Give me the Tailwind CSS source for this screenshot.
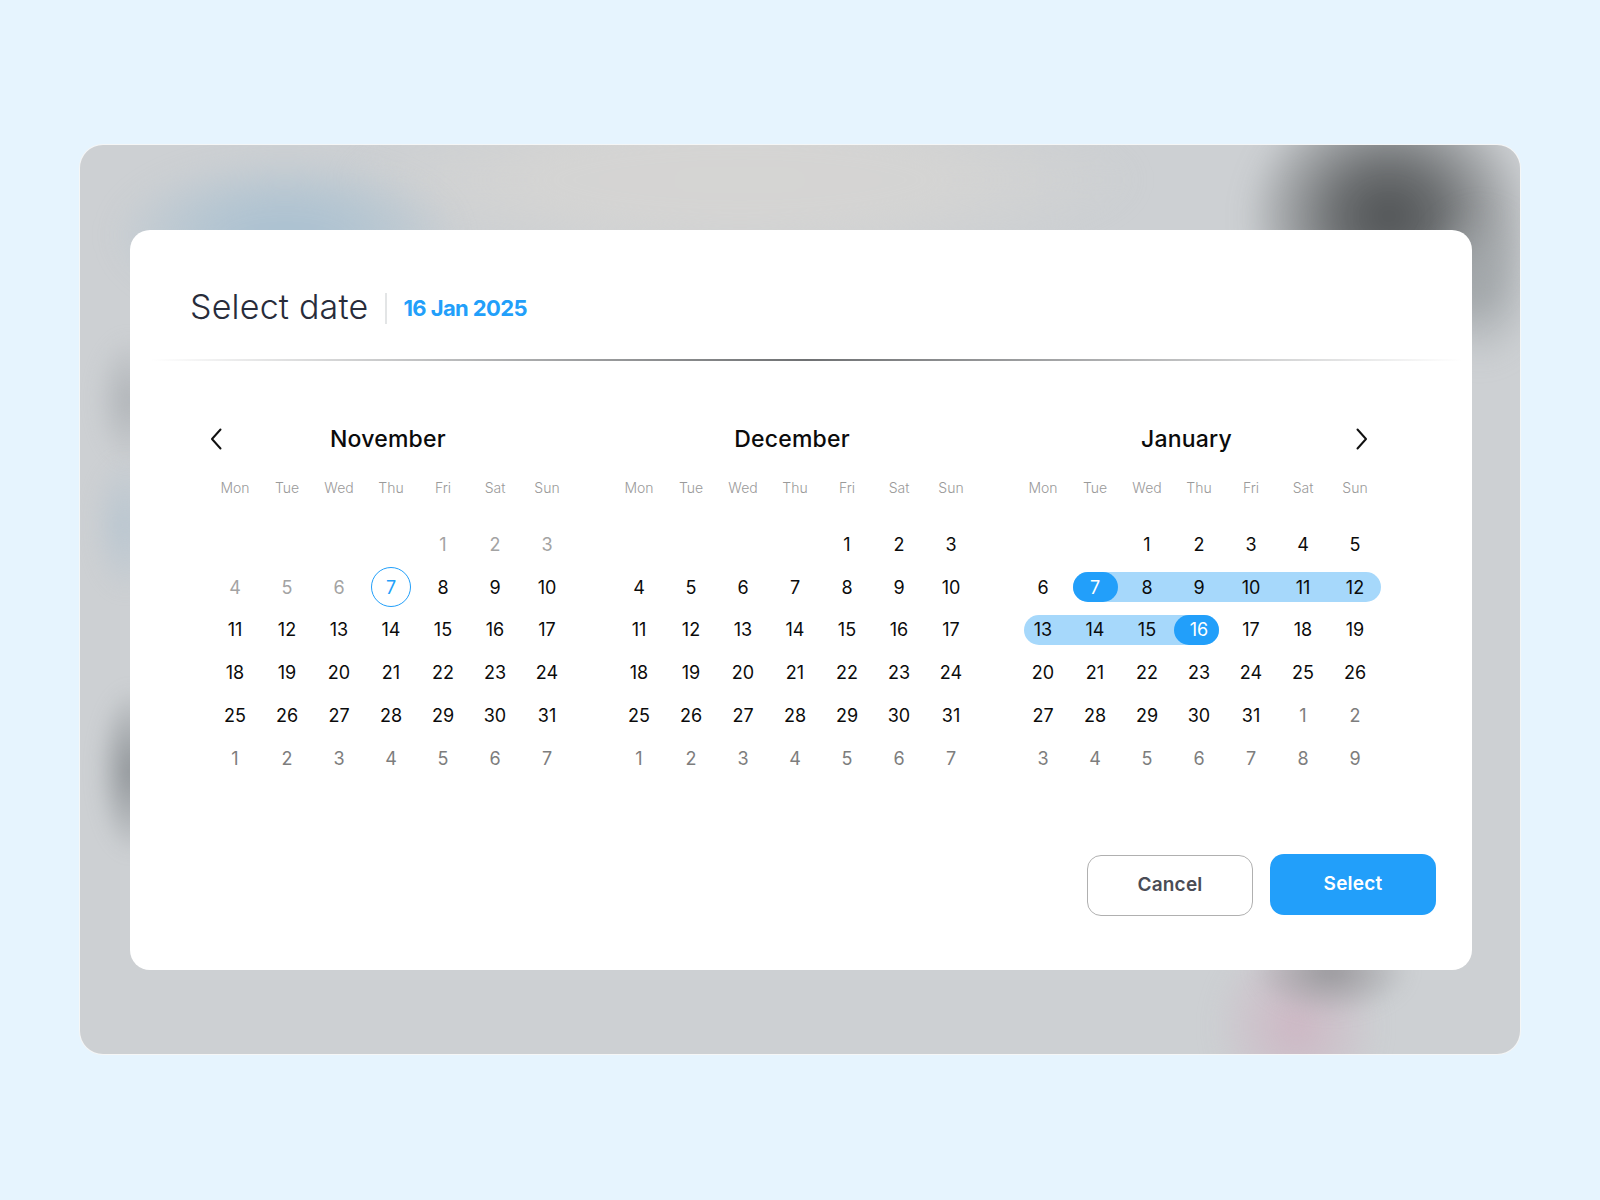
<!DOCTYPE html>
<html lang="en">
<head>
<meta charset="utf-8">
<title>Select date</title>
<script src="https://cdn.jsdelivr.net/npm/@tailwindcss/browser@4"></script>
</head>
<body class="bg-[#e6f4fe] font-['Inter',sans-serif]">
<div class="h-[1200px] pt-[144px] pl-[79px] overflow-hidden">
  <!-- blurred backdrop -->
  <div class="relative w-[1442px] h-[911px] pt-[85px] pl-[50px] rounded-[24px] overflow-hidden bg-[#cdd0d3] border border-white/80">
    <div class="absolute left-[260px] top-[-50px] w-[800px] h-[170px] blur-[12px] bg-[radial-gradient(ellipse_closest-side,#d6d5d3,#d4d4d3_50%,transparent)]"></div>
    <div class="absolute left-[30px] top-[10px] w-[350px] h-[160px] blur-[12px] bg-[radial-gradient(ellipse_closest-side,#a9c0d1,#b4c5d1_45%,transparent)]"></div>
    <div class="absolute left-[1164px] top-[-59px] w-[290px] h-[260px] blur-[12px] bg-[radial-gradient(ellipse_closest-side,#505355,#6a6d6f_35%,transparent)]"></div>
    <div class="absolute left-[1340px] top-[60px] w-[120px] h-[160px] blur-[12px] bg-[radial-gradient(ellipse_closest-side,#a0a5a8,transparent)]"></div>
    <div class="absolute left-[16px] top-[541px] w-[70px] h-[170px] blur-[8px] bg-[radial-gradient(ellipse_closest-side,#8e9397,transparent)]"></div>
    <div class="absolute left-[14px] top-[190px] w-[70px] h-[130px] blur-[8px] bg-[radial-gradient(ellipse_closest-side,#b0b4b8,transparent)]"></div>
    <div class="absolute left-[10px] top-[310px] w-[70px] h-[140px] blur-[8px] bg-[radial-gradient(ellipse_closest-side,#b9c6d0,transparent)]"></div>
    <div class="absolute left-[1131px] top-[786px] w-[170px] h-[190px] blur-[10px] bg-[radial-gradient(ellipse_closest-side,#cdb7c4,transparent)]"></div>
    <div class="absolute left-[1171px] top-[781px] w-[160px] h-[90px] blur-[8px] bg-[radial-gradient(ellipse_closest-side,#98979b,transparent)]"></div>

    <!-- dialog -->
    <div class="relative w-[1342px] h-[740px] rounded-[20px] bg-white">
      <div class="flex items-center h-[129px] pt-[27px] pl-[60px]">
        <h2 class="mb-[3px] text-[34px] font-light text-[#282c3a] tracking-[0.2px]">Select date</h2>
        <span class="w-[2px] h-[31px] bg-[#e3e5e6] ml-[17px]"></span>
        <span class="ml-[16px] text-[22px] font-bold text-[#229ffa] tracking-[-0.6px]">16 Jan 2025</span>
      </div>
      <div class="h-[2px] ml-[20px] mr-[10px] bg-gradient-to-r from-white via-[#6f7173] to-white"></div>

      <div class="flex gap-[40px] pl-[79px] mt-[58px]">
        <!-- November -->
        <div class="w-[364px]">
          <div class="flex items-center h-[40px] text-[23px] font-medium tracking-[0.2px] text-[#0b0b0b]">
            <svg class="w-[18px] h-[24px] ml-[-2px]" viewBox="0 0 18 24" fill="none" stroke="#111" stroke-width="2" stroke-linecap="round" stroke-linejoin="round"><path d="M13.5 2.5 5 12l8.5 9.5"/></svg>
            <span class="ml-[105px]">November</span>
          </div>
          <div class="grid grid-cols-7 justify-items-center h-[20px] mt-[18px] text-[14px] font-light text-[#9a9a9a]">
            <span>Mon</span><span>Tue</span><span>Wed</span><span>Thu</span><span>Fri</span><span>Sat</span><span>Sun</span>
          </div>
          <div class="mt-[26px] text-[18px] text-[#0b0b0b]">
            <div class="grid grid-cols-7 justify-items-center items-center h-[42.8px] text-[#a3a3a3]">
              <span></span><span></span><span></span><span></span><span>1</span><span>2</span><span>3</span>
            </div>
            <div class="grid grid-cols-7 justify-items-center items-center h-[42.8px]">
              <span class="text-[#a3a3a3]">4</span><span class="text-[#a3a3a3]">5</span><span class="text-[#a3a3a3]">6</span>
              <span class="flex items-center justify-center w-[40px] h-[40px] rounded-full border border-[#229ffa] text-[#229ffa]">7</span>
              <span>8</span><span>9</span><span>10</span>
            </div>
            <div class="grid grid-cols-7 justify-items-center items-center h-[42.8px]">
              <span>11</span><span>12</span><span>13</span><span>14</span><span>15</span><span>16</span><span>17</span>
            </div>
            <div class="grid grid-cols-7 justify-items-center items-center h-[42.8px]">
              <span>18</span><span>19</span><span>20</span><span>21</span><span>22</span><span>23</span><span>24</span>
            </div>
            <div class="grid grid-cols-7 justify-items-center items-center h-[42.8px]">
              <span>25</span><span>26</span><span>27</span><span>28</span><span>29</span><span>30</span><span>31</span>
            </div>
            <div class="grid grid-cols-7 justify-items-center items-center h-[42.8px] text-[#7d7d7d]">
              <span>1</span><span>2</span><span>3</span><span>4</span><span>5</span><span>6</span><span>7</span>
            </div>
          </div>
        </div>

        <!-- December -->
        <div class="w-[364px]">
          <div class="flex items-center justify-center h-[40px] pr-[6px] text-[23px] font-medium tracking-[0.2px] text-[#0b0b0b]">December</div>
          <div class="grid grid-cols-7 justify-items-center h-[20px] mt-[18px] text-[14px] font-light text-[#9a9a9a]">
            <span>Mon</span><span>Tue</span><span>Wed</span><span>Thu</span><span>Fri</span><span>Sat</span><span>Sun</span>
          </div>
          <div class="mt-[26px] text-[18px] text-[#0b0b0b]">
            <div class="grid grid-cols-7 justify-items-center items-center h-[42.8px]">
              <span></span><span></span><span></span><span></span><span>1</span><span>2</span><span>3</span>
            </div>
            <div class="grid grid-cols-7 justify-items-center items-center h-[42.8px]">
              <span>4</span><span>5</span><span>6</span><span>7</span><span>8</span><span>9</span><span>10</span>
            </div>
            <div class="grid grid-cols-7 justify-items-center items-center h-[42.8px]">
              <span>11</span><span>12</span><span>13</span><span>14</span><span>15</span><span>16</span><span>17</span>
            </div>
            <div class="grid grid-cols-7 justify-items-center items-center h-[42.8px]">
              <span>18</span><span>19</span><span>20</span><span>21</span><span>22</span><span>23</span><span>24</span>
            </div>
            <div class="grid grid-cols-7 justify-items-center items-center h-[42.8px]">
              <span>25</span><span>26</span><span>27</span><span>28</span><span>29</span><span>30</span><span>31</span>
            </div>
            <div class="grid grid-cols-7 justify-items-center items-center h-[42.8px] text-[#7d7d7d]">
              <span>1</span><span>2</span><span>3</span><span>4</span><span>5</span><span>6</span><span>7</span>
            </div>
          </div>
        </div>

        <!-- January -->
        <div class="w-[364px]">
          <div class="flex items-center h-[40px] text-[23px] font-medium tracking-[0.2px] text-[#0b0b0b]">
            <span class="ml-[124px]">January</span>
            <svg class="w-[18px] h-[24px] ml-[121px]" viewBox="0 0 18 24" fill="none" stroke="#111" stroke-width="2" stroke-linecap="round" stroke-linejoin="round"><path d="m4.5 2.5 8.5 9.5-8.5 9.5"/></svg>
          </div>
          <div class="grid grid-cols-7 justify-items-center h-[20px] mt-[18px] text-[14px] font-light text-[#9a9a9a]">
            <span>Mon</span><span>Tue</span><span>Wed</span><span>Thu</span><span>Fri</span><span>Sat</span><span>Sun</span>
          </div>
          <div class="mt-[26px] text-[18px] text-[#0b0b0b]">
            <div class="grid grid-cols-7 justify-items-center items-center h-[42.8px]">
              <span></span><span></span><span>1</span><span>2</span><span>3</span><span>4</span><span>5</span>
            </div>
            <div class="grid grid-cols-7 grid-rows-1 justify-items-center items-center h-[42.8px]">
              <div class="col-start-2 col-span-6 row-start-1 justify-self-stretch h-[30px] ml-[4px] rounded-full bg-[#a6d8fb]">
                <div class="w-[45px] h-[30px] rounded-full bg-[#229ffa]"></div>
              </div>
              <span class="col-start-1 row-start-1">6</span>
              <span class="relative col-start-2 row-start-1 text-white">7</span>
              <span class="relative col-start-3 row-start-1">8</span>
              <span class="relative col-start-4 row-start-1">9</span>
              <span class="relative col-start-5 row-start-1">10</span>
              <span class="relative col-start-6 row-start-1">11</span>
              <span class="relative col-start-7 row-start-1">12</span>
            </div>
            <div class="grid grid-cols-7 grid-rows-1 justify-items-center items-center h-[42.8px]">
              <div class="flex justify-end col-start-1 col-span-4 row-start-1 justify-self-stretch h-[30px] ml-[7px] mr-[6px] rounded-full bg-[#a6d8fb]">
                <div class="w-[45px] h-[30px] rounded-full bg-[#229ffa]"></div>
              </div>
              <span class="relative col-start-1 row-start-1">13</span>
              <span class="relative col-start-2 row-start-1">14</span>
              <span class="relative col-start-3 row-start-1">15</span>
              <span class="relative col-start-4 row-start-1 text-white">16</span>
              <span class="col-start-5 row-start-1">17</span>
              <span class="col-start-6 row-start-1">18</span>
              <span class="col-start-7 row-start-1">19</span>
            </div>
            <div class="grid grid-cols-7 justify-items-center items-center h-[42.8px]">
              <span>20</span><span>21</span><span>22</span><span>23</span><span>24</span><span>25</span><span>26</span>
            </div>
            <div class="grid grid-cols-7 justify-items-center items-center h-[42.8px]">
              <span>27</span><span>28</span><span>29</span><span>30</span><span>31</span><span class="text-[#7d7d7d]">1</span><span class="text-[#7d7d7d]">2</span>
            </div>
            <div class="grid grid-cols-7 justify-items-center items-center h-[42.8px] text-[#7d7d7d]">
              <span>3</span><span>4</span><span>5</span><span>6</span><span>7</span><span>8</span><span>9</span>
            </div>
          </div>
        </div>
      </div>

      <!-- actions -->
      <div class="flex justify-end items-start gap-[17px] pr-[36px] mt-[74px]">
        <button class="w-[166px] h-[61px] mt-[1px] rounded-[14px] border border-[#b0b0b0] bg-white text-[19px] font-semibold tracking-[0.2px] text-[#4a4c55]">Cancel</button>
        <button class="w-[166px] h-[61px] rounded-[14px] bg-[#229ffa] text-[19px] font-semibold tracking-[0.2px] text-white">Select</button>
      </div>
    </div>
  </div>
</div>
</body>
</html>
